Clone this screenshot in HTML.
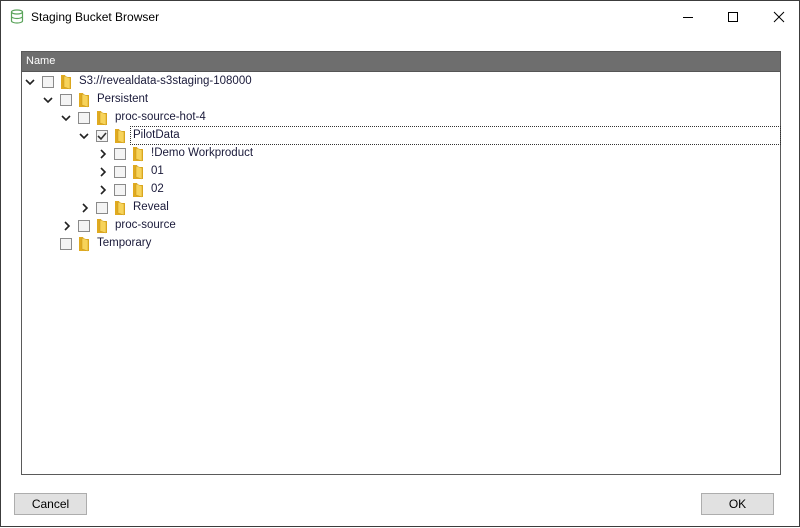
<!DOCTYPE html><html><head><style>
body{margin:0;width:800px;height:527px;overflow:hidden;background:#fff;font-family:"Liberation Sans",sans-serif;font-size:11.5px;}
.win{position:absolute;left:0;top:0;width:798px;height:525px;border:1px solid #3c3c3c;background:#fff}
.t{position:absolute;left:30px;top:9px;font-size:12px;color:#000}
.panel{position:absolute;left:20px;top:50px;width:758px;height:422px;border:1px solid #5a5a5a;}
.hdr{position:absolute;left:0;top:0;right:0;height:19px;background:#6e6e6e;border-bottom:1px solid #555;color:#fff;font-size:11px;line-height:19px;padding-left:4px}
.tx{position:absolute;color:#1a1a3a;white-space:nowrap}
.btn{position:absolute;top:492px;width:71px;height:20px;border:1px solid #adadad;background:#e1e1e1;text-align:center;line-height:20px;font-size:12px}
</style></head><body><div class="win">
<svg style="position:absolute;left:9px;top:8px" width="14" height="16" viewBox="0 0 14 16" fill="none" stroke="#5aa35a" stroke-width="1.2"><ellipse cx="7" cy="3" rx="5.5" ry="2"/><path d="M1.5 3v9c0 1 2.5 2 5.5 2s5.5-1 5.5-2V3M1.5 7.5c0 1 2.5 2 5.5 2s5.5-1 5.5-2"/></svg>
<div class="t">Staging Bucket Browser</div>
<svg style="position:absolute;left:680px;top:10px" width="110" height="14" fill="none" stroke="#000" stroke-width="1"><path d="M2 6.5h10"/><rect x="47.5" y="1.5" width="9" height="9"/><path d="M93 1l10 10M103 1l-10 10"/></svg>
<div class="panel"><div class="hdr">Name</div></div>
<div id="tree"></div>
<div style="position:absolute;left:129px;top:125px;width:649px;height:17px;border:1px dotted #333"></div>
<div class="btn" style="left:13px">Cancel</div>
<div class="btn" style="left:700px">OK</div>
</div>
<script>
var items=[[0,'e','S3://revealdata-s3staging-108000'],[1,'e','Persistent'],[2,'e','proc-source-hot-4'],[3,'e','PilotData',1],[4,'c','!Demo Workproduct'],[4,'c','01'],[4,'c','02'],[3,'c','Reveal'],[2,'c','proc-source'],[1,'n','Temporary']];
var h='<svg style="position:absolute;left:0;top:0" width="800" height="527">';var t='';
items.forEach(function(it,i){var L=it[0],y=71+18*i,x=18*L-1;
if(it[1]=='e')h+='<path d="M'+(26+x)+' '+(y+8)+'l4 4 4-4" stroke="#222" stroke-width="1.6" fill="none"/>';
if(it[1]=='c')h+='<path d="M'+(29+x)+' '+(y+6)+'l4 4-4 4" stroke="#222" stroke-width="1.6" fill="none"/>';
h+='<rect x="'+(42.5+x)+'" y="'+(y+4.5)+'" width="11" height="11" fill="#f4f4f4" stroke="#8a8a8a"/>';
if(it[3])h+='<path d="M'+(44+x)+' '+(y+10)+'l3 3 5-6" stroke="#333" stroke-width="1.6" fill="none"/>';
h+='<path d="M'+(61+x)+' '+(y+3)+'h4l1 2h5v12h-10z" fill="#e0aa20"/><path d="M'+(64+x)+' '+(y+4)+'l6 2v11l-6-2z" fill="#f7d35a" stroke="#c99a1a" stroke-width=".5"/>';
t+='<div class="tx" style="left:'+(79+x)+'px;top:'+(y+3)+'px">'+it[2]+'</div>';});
document.getElementById('tree').innerHTML=h+'</svg>'+t;
</script></body></html>
